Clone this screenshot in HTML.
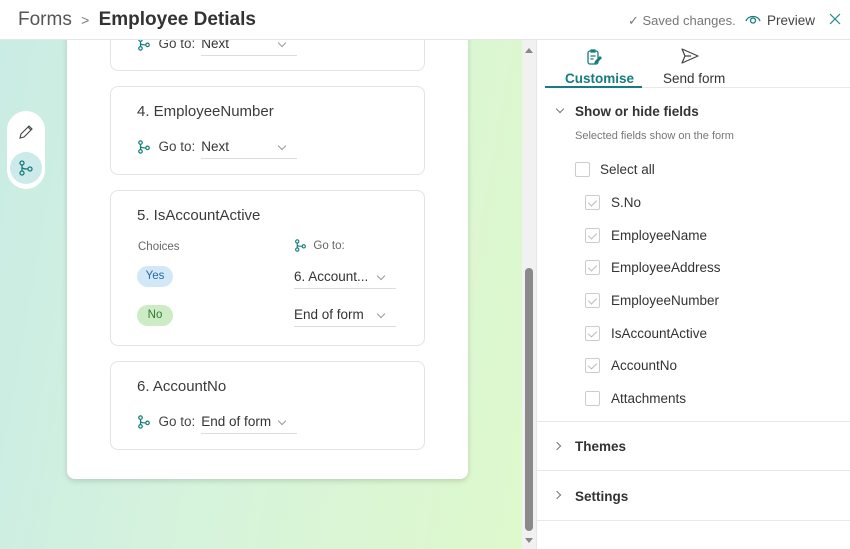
<!DOCTYPE html>
<html><head><meta charset="utf-8"><style>
*{box-sizing:border-box;margin:0;padding:0}
body{width:850px;height:549px;overflow:hidden;font-family:"Liberation Sans",sans-serif;position:relative;background:#fff}
.hdr{position:absolute;left:0;top:0;width:850px;height:40px;background:#fff;border-bottom:1px solid #e6e6e6;z-index:3}
.bg{position:absolute;left:0;top:40px;width:522px;height:509px;background:linear-gradient(100deg,#c9ece4 0%,#d6f3dc 45%,#def9cc 100%)}
.sheet{position:absolute;left:67px;top:30px;width:401px;height:449px;background:#fff;border-radius:8px;box-shadow:0 2px 6px rgba(0,0,0,.15)}
.card{position:absolute;left:110px;width:315px;background:#fff;border:1px solid #e3e3e3;border-radius:8px}
.t{position:absolute;left:26px;font-size:15px;color:#3b3b3b}
.go{position:absolute;left:26px;font-size:13.5px;color:#444;display:flex;align-items:flex-start;line-height:16px}
.go svg{margin-top:1px}
.dd{display:inline-block;border-bottom:1px solid #ddd;width:96px;height:20px;position:relative;margin-left:6px;color:#333}
.dd:after{content:"";position:absolute;right:12px;top:4px;width:5px;height:5px;border-right:1px solid #999;border-bottom:1px solid #999;transform:rotate(45deg)}
.rail{position:absolute;left:7px;top:111px;width:38px;height:78px;background:#fff;border-radius:19px}
.sb{position:absolute;left:522px;top:40px;width:14px;height:509px;background:#f1f1f1}
.thumb{position:absolute;left:3px;top:228px;width:8px;height:263px;background:#8a8a8a;border-radius:4px}
.rp{position:absolute;left:536px;top:40px;width:314px;height:509px;background:#fff;border-left:1px solid #e5e5e5}
.cb{position:absolute;width:15px;height:15px;border:1px solid #ccc;border-radius:2px}
.lbl{position:absolute;font-size:13.5px;color:#333}
.chk:after{content:"";position:absolute;left:4px;top:2px;width:4px;height:7px;border-right:1px solid #bbb;border-bottom:1px solid #bbb;transform:rotate(45deg)}
.hr{position:absolute;left:0;width:314px;border-top:1px solid #e8e8e8}
.sec{position:absolute;left:38px;font-size:13.5px;font-weight:bold;color:#333}
.chev{position:absolute;left:20px;width:6px;height:6px;border-right:1px solid #777;border-bottom:1px solid #777}
</style></head><body>
<div class="hdr">
<div style="position:absolute;left:18px;top:9px;font-size:19px;color:#555">Forms <span style="font-size:14px;color:#777;margin:0 4px">&gt;</span> <span style="color:#333;font-weight:bold">Employee Detials</span></div>
<div style="position:absolute;left:628px;top:13px;font-size:13px;color:#777">✓ Saved changes.</div>
<svg style="position:absolute;left:745px;top:13px" width="16" height="12" viewBox="0 0 16 12"><path d="M1 8C3 2 13 2 15 8" fill="none" stroke="#167c7c" stroke-width="1.3"/><circle cx="8" cy="7.5" r="2.5" fill="none" stroke="#167c7c" stroke-width="1.3"/></svg>
<div style="position:absolute;left:767px;top:13px;font-size:13.5px;color:#444">Preview</div>
<svg style="position:absolute;left:829px;top:13px" width="12" height="12" viewBox="0 0 12 12"><path d="M1 1l10 10M11 1L1 11" stroke="#1a8a8a" stroke-width="1.2"/></svg>
</div>
<div class="bg"></div>
<div class="sheet"></div>
<div class="rail">
<svg style="position:absolute;left:11px;top:13px" width="16" height="16" viewBox="0 0 16 16"><path d="M2 14l1-4 8-8 3 3-8 8z M10 3l3 3" fill="none" stroke="#444" stroke-width="1.1"/></svg>
<div style="position:absolute;left:3px;top:41px;width:32px;height:32px;border-radius:50%;background:#cdeaea"></div>
<svg style="position:absolute;left:12px;top:49px" width="14" height="16" viewBox="0 0 14 16"><circle cx="3" cy="3" r="2" fill="none" stroke="#167c7c" stroke-width="1.3"/><circle cx="3" cy="13" r="2" fill="none" stroke="#167c7c" stroke-width="1.3"/><circle cx="11" cy="9" r="2" fill="none" stroke="#167c7c" stroke-width="1.3"/><path d="M3 5v6M3 7c0 2 3 2 6 2" fill="none" stroke="#167c7c" stroke-width="1.3"/></svg>
</div>

<div class="card" style="top:20px;height:51px"><div class="go" style="top:15px"><svg width="14" height="14" viewBox="0 0 14 16"><circle cx="3" cy="3" r="2" fill="none" stroke="#167c7c" stroke-width="1.4"/><circle cx="3" cy="13" r="2" fill="none" stroke="#167c7c" stroke-width="1.4"/><circle cx="11" cy="9" r="2" fill="none" stroke="#167c7c" stroke-width="1.4"/><path d="M3 5v6M3 7c0 2 3 2 6 2" fill="none" stroke="#167c7c" stroke-width="1.4"/></svg>&nbsp;&nbsp;Go to:<span class="dd">Next</span></div></div>
<div class="hdr" style="height:40px;z-index:2"></div>

<div class="card" style="top:86px;height:89px"><div class="t" style="top:16px">4. EmployeeNumber</div><div class="go" style="top:52px"><svg width="14" height="14" viewBox="0 0 14 16"><circle cx="3" cy="3" r="2" fill="none" stroke="#167c7c" stroke-width="1.4"/><circle cx="3" cy="13" r="2" fill="none" stroke="#167c7c" stroke-width="1.4"/><circle cx="11" cy="9" r="2" fill="none" stroke="#167c7c" stroke-width="1.4"/><path d="M3 5v6M3 7c0 2 3 2 6 2" fill="none" stroke="#167c7c" stroke-width="1.4"/></svg>&nbsp;&nbsp;Go to:<span class="dd">Next</span></div></div>

<div class="card" style="top:190px;height:156px"><div class="t" style="top:16px">5. IsAccountActive</div>
<div style="position:absolute;left:27px;top:50px;font-size:11.5px;color:#666">Choices</div>
<div style="position:absolute;left:183px;top:48px;font-size:11.5px;color:#666;display:flex;align-items:center"><svg width="13" height="13" viewBox="0 0 14 16"><circle cx="3" cy="3" r="2" fill="none" stroke="#167c7c" stroke-width="1.4"/><circle cx="3" cy="13" r="2" fill="none" stroke="#167c7c" stroke-width="1.4"/><circle cx="11" cy="9" r="2" fill="none" stroke="#167c7c" stroke-width="1.4"/><path d="M3 5v6M3 7c0 2 3 2 6 2" fill="none" stroke="#167c7c" stroke-width="1.4"/></svg>&nbsp;&nbsp;Go to:</div>
<div style="position:absolute;left:26px;top:75px;width:36px;height:21px;border-radius:11px;background:#d3e8f7;color:#2a6aa0;font-size:11.5px;text-align:center;line-height:21px">Yes</div>
<div style="position:absolute;left:26px;top:114px;width:36px;height:21px;border-radius:11px;background:#cdecc6;color:#2e7a2e;font-size:11.5px;text-align:center;line-height:21px">No</div>
<div class="go" style="left:183px;top:78px"><span class="dd" style="margin:0;width:102px">6. Account...</span></div>
<div class="go" style="left:183px;top:116px"><span class="dd" style="margin:0;width:102px">End of form</span></div>
</div>

<div class="card" style="top:361px;height:89px"><div class="t" style="top:16px">6. AccountNo</div><div class="go" style="top:52px"><svg width="14" height="14" viewBox="0 0 14 16"><circle cx="3" cy="3" r="2" fill="none" stroke="#167c7c" stroke-width="1.4"/><circle cx="3" cy="13" r="2" fill="none" stroke="#167c7c" stroke-width="1.4"/><circle cx="11" cy="9" r="2" fill="none" stroke="#167c7c" stroke-width="1.4"/><path d="M3 5v6M3 7c0 2 3 2 6 2" fill="none" stroke="#167c7c" stroke-width="1.4"/></svg>&nbsp;&nbsp;Go to:<span class="dd">End of form</span></div></div>

<div class="sb"><div style="position:absolute;left:3px;top:8px;border:4px solid transparent;border-bottom:5px solid #888;border-top:0"></div><div class="thumb"></div><div style="position:absolute;left:3px;top:498px;border:4px solid transparent;border-top:5px solid #888;border-bottom:0"></div></div>

<div class="rp">
<svg style="position:absolute;left:48px;top:8px" width="18" height="18" viewBox="0 0 18 18"><rect x="3" y="3" width="10" height="13" rx="2" fill="none" stroke="#167c7c" stroke-width="1.3"/><path d="M6 2h4v2H6z M5.5 8h5M5.5 11h3" fill="none" stroke="#167c7c" stroke-width="1.2"/><path d="M9 16l1-3 5-5 2 2-5 5z" fill="#167c7c"/></svg>
<div style="position:absolute;left:28px;top:31px;font-size:13.5px;color:#167c7c;font-weight:bold">Customise</div>
<div style="position:absolute;left:8px;top:46px;width:97px;height:2px;background:#167c7c"></div>
<div class="hr" style="top:47px;left:105px;width:209px"></div>
<svg style="position:absolute;left:144px;top:8px" width="18" height="16" viewBox="0 0 18 16"><path d="M1 1l16 7-16 7 3-7z M4 8h6" fill="none" stroke="#444" stroke-width="1.2" stroke-linejoin="round"/></svg>
<div style="position:absolute;left:126px;top:31px;font-size:13.5px;color:#333">Send form</div>
<div class="chev" style="top:66px;transform:rotate(45deg)"></div>
<div class="sec" style="top:64px">Show or hide fields</div>
<div style="position:absolute;left:38px;top:90px;font-size:11px;color:#777">Selected fields show on the form</div>
<div class="cb" style="left:38px;top:122px"></div><div class="lbl" style="left:63px;top:122px">Select all</div>
<div class="cb chk" style="left:48px;top:155px"></div><div class="lbl" style="left:74px;top:155px">S.No</div>
<div class="cb chk" style="left:48px;top:188px"></div><div class="lbl" style="left:74px;top:188px">EmployeeName</div>
<div class="cb chk" style="left:48px;top:220px"></div><div class="lbl" style="left:74px;top:220px">EmployeeAddress</div>
<div class="cb chk" style="left:48px;top:253px"></div><div class="lbl" style="left:74px;top:253px">EmployeeNumber</div>
<div class="cb chk" style="left:48px;top:286px"></div><div class="lbl" style="left:74px;top:286px">IsAccountActive</div>
<div class="cb chk" style="left:48px;top:318px"></div><div class="lbl" style="left:74px;top:318px">AccountNo</div>
<div class="cb" style="left:48px;top:351px"></div><div class="lbl" style="left:74px;top:351px">Attachments</div>
<div class="hr" style="top:381px"></div>
<div class="chev" style="top:403px;left:17px;transform:rotate(-45deg)"></div>
<div class="sec" style="top:399px">Themes</div>
<div class="hr" style="top:430px"></div>
<div class="chev" style="top:452px;left:17px;transform:rotate(-45deg)"></div>
<div class="sec" style="top:449px">Settings</div>
<div class="hr" style="top:480px"></div>
</div>
</body></html>
